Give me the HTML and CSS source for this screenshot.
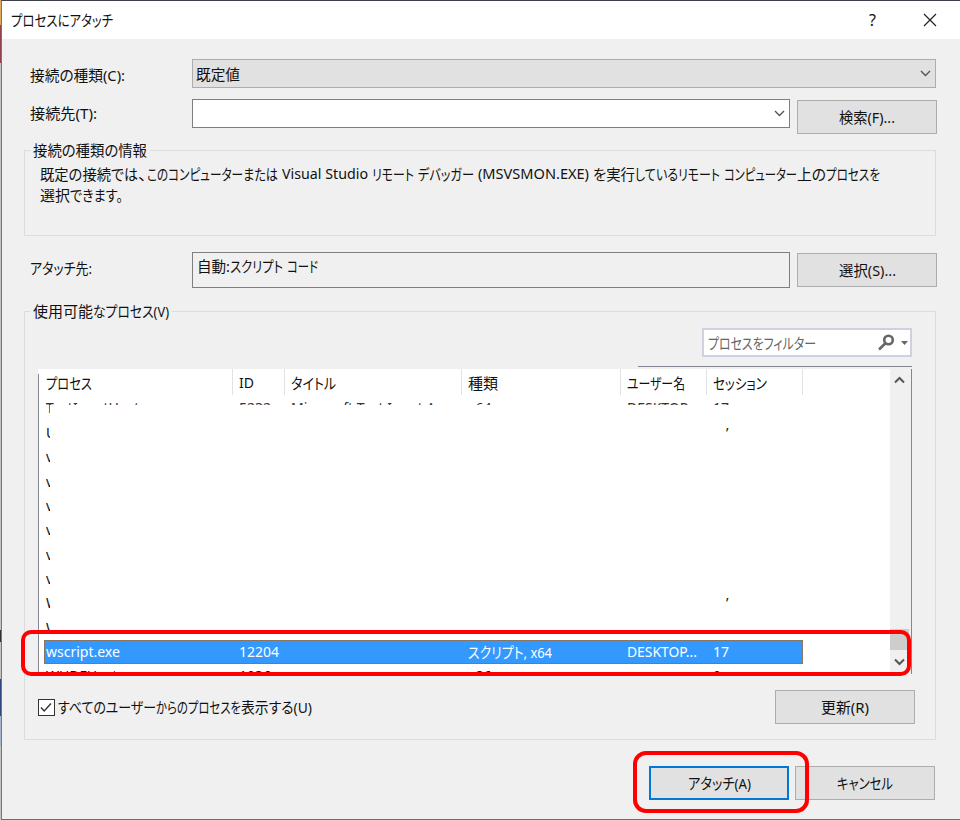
FILE: index.html
```html
<!DOCTYPE html>
<html lang="ja">
<head>
    <meta charset="utf-8">
    <title>プロセスにアタッチ</title>
    <link rel="stylesheet" href="styles.css">
</head>
<body>
<div class="behind"><i class="b1"></i><i class="b2"></i><i class="b3"></i><i class="b4"></i><i class="b5"></i></div>
<div class="dialog">
    <div class="titlebar">
        <span class="fit title" data-w="102">プロセスにアタッチ</span>
        <span class="help">?</span>
        <svg class="close" width="14" height="14" viewBox="0 0 14 14"><path d="M1 1l12 12M13 1L1 13"/></svg>
    </div>

    <div class="row row_type">
        <label><span class="fit" data-w="95">接続の種類(C):</span></label>
        <div class="combo gray"><span class="fit" data-w="44">既定値</span>
            <svg width="11" height="7" viewBox="0 0 11 7"><path d="M1 1l4.5 4.5L10 1"/></svg>
        </div>
    </div>

    <div class="row row_target">
        <label><span class="fit" data-w="67">接続先(T):</span></label>
        <div class="combo"><span></span>
            <svg width="11" height="7" viewBox="0 0 11 7"><path d="M1 1l4.5 4.5L10 1"/></svg>
        </div>
        <button><span class="fit" data-w="56">検索(F)...</span></button>
    </div>

    <div class="group info">
        <div class="legend"><span class="fit" data-w="114">接続の種類の情報</span></div>
        <p><span class="fit" data-w="71">既定の接続</span><span class="fit" data-w="27">では</span><span class="fit" data-w="9">、</span><span class="fit" data-w="96">このコンピューター</span><span class="fit" data-w="35">または</span><span class="fit gap latin" data-w="86">Visual Studio</span><span class="fit gap" data-w="42">リモート</span><span class="fit gap" data-w="56">デバッガー</span><span class="fit gap latin" data-w="111">(MSVSMON.EXE)</span><span class="fit gap" data-w="42">を実行</span><span class="fit" data-w="43">している</span><span class="fit" data-w="42">リモート</span><span class="fit gap" data-w="73">コンピューター</span><span class="fit" data-w="29">上の</span><span class="fit" data-w="54">プロセスを</span></p>
        <p><span class="fit" data-w="30">選択</span><span class="fit" data-w="53">できます。</span></p>
    </div>

    <div class="row row_attach">
        <label><span class="fit" data-w="62">アタッチ先:</span></label>
        <div class="code_type"><span class="fit" data-w="33">自動:</span><span class="fit" data-w="53">スクリプト</span><span class="fit gap" data-w="31">コード</span></div>
        <button><span class="fit" data-w="57">選択(S)...</span></button>
    </div>

    <div class="group processes">
        <div class="legend"><span class="fit" data-w="60">使用可能</span><span class="fit" data-w="76">なプロセス(V)</span></div>
        <div class="filter">
            <span class="fit" data-w="108">プロセスをフィルター</span>
            <svg width="32" height="20" viewBox="0 0 32 20">
                <circle cx="12.5" cy="7" r="4.3"/><path d="M9.2 10.5L3 16.5"/>
                <path class="tri" d="M25 8h7l-3.5 4z"/>
            </svg>
        </div>

        <div class="list">
            <div class="table">
                <div class="cols head">
                    <span><b class="fit" data-w="46">プロセス</b></span><span>ID</span><span><b class="fit" data-w="45">タイトル</b></span><span><b class="fit" data-w="30">種類</b></span><span><b class="fit" data-w="58">ユーザー名</b></span><span><b class="fit" data-w="54">セッション</b></span>
                </div>
                <div class="rows">
                    <div class="cut">
                        <div class="cols"><span>TextInputHost.exe</span><span>5232</span><span>Microsoft Text Input A</span><span>x64</span><span>DESKTOP</span><span>17</span></div>
                        <em>T</em>
                    </div>
                    <div class="part"><em>U</em><u>’</u></div>
                    <div class="part"><em>v</em></div>
                    <div class="part"><em>v</em></div>
                    <div class="part"><em>v</em></div>
                    <div class="part"><em>v</em></div>
                    <div class="part"><em>v</em></div>
                    <div class="part"><em>v</em></div>
                    <div class="part"><em>W</em><u>’</u></div>
                    <div class="part"><em>W</em></div>
                    <div class="cols selected"><span>wscript.exe</span><span>12204</span><span></span><span><b class="fit" data-w="84">スクリプト, x64</b></span><span><b class="fit latin" data-w="70">DESKTOP...</b></span><span>17</span></div>
                    <div class="cols last"><span>WUDFHost.exe</span><span>1036</span><span></span><span>x86</span><span></span><span>0</span></div>
                </div>
            </div>
            <div class="scroll">
                <svg width="11" height="8" viewBox="0 0 11 8"><path d="M1 6.5L5.5 2L10 6.5"/></svg>
                <div class="thumb"></div>
                <svg width="11" height="8" viewBox="0 0 11 8"><path d="M1 1.5L5.5 6L10 1.5"/></svg>
            </div>
            <div class="topline"></div>
            <div class="mark mark_row"></div>
        </div>

        <div class="under">
            <div class="check"><svg width="12" height="13" viewBox="0 0 12 12"><path d="M1 6l3.2 3.5L11 2"/></svg></div>
            <span class="fit" data-w="98">すべてのユーザー</span><span class="fit" data-w="85">からのプロセスを</span><span class="fit" data-w="71">表示する(U)</span>
            <button><span class="fit" data-w="48">更新(R)</span></button>
        </div>
    </div>

    <div class="footer">
        <button class="default"><span class="fit" data-w="63">アタッチ(A)</span></button>
        <button><span class="fit" data-w="56">キャンセル</span></button>
        <div class="mark mark_attach"></div>
    </div>
</div>

<script>
    // squeeze each label to its UI font width
    document.querySelectorAll('.fit').forEach(function(el){
        let w = Number(el.dataset.w);
        let real = el.getBoundingClientRect().width;
        el.style.transform = `scaleX(${w/real})`;
        el.style.marginRight = `${w-real}px`;
    });
</script>
</body>
</html>
```

FILE: styles.css
```css
*{
    box-sizing:border-box;
}

body{
    margin:0;
    width:960px;
    height:820px;
    overflow:hidden;
    display:flex;
    background-color:#f0f0f0;
    color:#111;
    font-family:"Noto Sans", "Noto Sans CJK JP", sans-serif;
    font-size:14px;
    line-height:20px;
}

.behind{
    width:1px;
    display:flex;
    flex-direction:column;
    background-color:#c4c4c4;
}
.b1{
    height:25px;
    background-color:#d9a85c;
}
.b2{
    height:38px;
    background-color:#8d4450;
}
.b3{
    height:12px;
    margin-top:567px;
    background-color:#333;
}
.b4{
    height:37px;
    margin-top:37px;
    background-color:#2f477c;
}
.b5{
    height:30px;
    background-color:#a9b6d0;
}

.dialog{
    width:959px;
    height:820px;
    border-left:1px solid #777;
    border-top:1px solid #3f3f4c;
    border-bottom:1px solid #6e6e6e;
}

.fit{
    display:inline-block;
    flex-shrink:0;
    white-space:nowrap;
    font-size:15px;
    font-weight:normal;
    font-feature-settings:"palt";
    transform-origin:0 0;
}
.latin{
    font-size:14px;
}
.gap{
    margin-left:4px;
}

.titlebar{
    height:38px;
    padding:0 23px 0 9px;
    display:flex;
    align-items:center;
    background-color:white;
}
.help{
    margin-left:auto;
    margin-right:47px;
    font-size:16px;
}
svg{
    flex-shrink:0;
    fill:none;
    stroke:#555;
    stroke-width:1.4;
}
.close{
    stroke:#222;
    stroke-width:1.2;
}

.row{
    display:flex;
    margin-left:28px;
}
.row label{
    width:162px;
    flex-shrink:0;
    display:flex;
}
.row_type{
    margin-top:20px;
    height:29px;
}
.row_type label{
    padding-top:6px;
}
.row_target{
    margin-top:11px;
    height:35px;
}
.row_target label{
    padding-top:4px;
}

.combo{
    width:598px;
    height:29px;
    padding:0 4px 0 3px;
    display:flex;
    align-items:center;
    justify-content:space-between;
    background-color:white;
    border:1px solid #7f7f7f;
}
.gray{
    width:744px;
    background-color:#e1e1e1;
    border-color:#adadad;
}

button{
    width:140px;
    height:34px;
    margin:1px 0 0 7px;
    padding:0;
    flex-shrink:0;
    display:flex;
    align-items:center;
    justify-content:center;
    background-color:#e1e1e1;
    border:1px solid #adadad;
    color:#111;
    font:inherit;
}

.group{
    width:912px;
    margin-left:22px;
    border:1px solid #dcdcdc;
}
.legend{
    width:max-content;
    height:20px;
    margin:-11px 0 0 5px;
    padding:0 3px;
    background-color:#f0f0f0;
}
.info{
    height:86px;
    margin-top:16px;
}
.info .legend{
    height:22px;
}
.info p{
    display:flex;
    margin:0 0 0 15px;
    padding-top:2px;
    height:21px;
}

.row_attach{
    margin-top:16px;
    height:36px;
}
.row_attach label{
    padding-top:6px;
}
.code_type{
    width:598px;
    height:36px;
    padding:3px 4px;
    display:flex;
    border:1px solid #7f7f7f;
}

.processes{
    height:429px;
    margin-top:23px;
}
.filter{
    width:210px;
    height:29px;
    margin:7px 0 0 677px;
    padding:0 2px 0 4px;
    display:flex;
    align-items:center;
    justify-content:space-between;
    background-color:white;
    border:2px solid #d0d0df;
    color:#666;
}
.filter svg{
    stroke:#666;
    stroke-width:2.6;
}
.filter .tri{
    fill:#666;
    stroke:none;
}

.list{
    position:relative;
    width:874px;
    height:305px;
    margin:12px 0 0 13px;
    padding-right:2px;
    display:flex;
    border-right:1px solid #828790;
}
.topline{
    position:absolute;
    top:-3px;
    right:-1px;
    width:274px;
    height:1px;
    background-color:#828790;
}
.table{
    width:852px;
    height:303px;
    overflow:hidden;
    background:linear-gradient(#828790, #828790) 0 5px / 1px 100% no-repeat, white;
}
.cols{
    display:grid;
    grid-template-columns:195px 52px 177px 159px 86px 96px;
    font-size:14px;
}
.cols span{
    padding-left:6px;
    white-space:nowrap;
    overflow:hidden;
}
.cols span:first-child{
    padding-left:8px;
}
.head{
    width:765px;
    height:26px;
    line-height:28px;
}
.head span{
    height:26px;
    border-right:1px solid #e2e2e2;
}
.rows{
    height:277px;
    padding-top:1px;
}
.cut{
    height:25px;
    display:grid;
    color:#333;
}
.cut .cols{
    grid-area:1/1;
    height:9px;
    overflow:hidden;
    line-height:24px;
}
.cut em{
    grid-area:1/1;
    height:18px;
    line-height:24px;
}
em{
    width:4px;
    margin-left:8px;
    overflow:hidden;
    font-style:normal;
}
.part{
    display:flex;
    justify-content:space-between;
    width:692px;
    height:24.35px;
    line-height:24px;
}
.part u{
    width:4px;
    height:24px;
    overflow:hidden;
    text-decoration:none;
}
.selected{
    width:759px;
    height:24px;
    margin-left:6px;
    grid-template-columns:188px 52px 177px 159px 86px 94px;
    line-height:22px;
    background-color:#3399ff;
    border:1px solid #8c7462;
    color:white;
}
.cols.selected span:first-child{
    padding-left:1px;
}
.last{
    line-height:24px;
}

.scroll{
    width:19px;
    height:303px;
    padding:7px 0 6px;
    display:flex;
    flex-direction:column;
    align-items:center;
    background-color:#f0f0f0;
}
.scroll svg{
    stroke-width:2;
}
.thumb{
    width:19px;
    height:21px;
    margin:auto 0 8px;
    background-color:#cdcdcd;
}

.under{
    display:flex;
    margin:16px 20px 0 13px;
    height:34px;
}
.under .check{
    width:17px;
    height:17px;
    margin:9px 3px 0 0;
    padding:1px;
    display:flex;
    background-color:white;
    border:1px solid #333;
}
.check svg{
    stroke:#333;
}
.under > .fit{
    margin-top:7px;
}
.under button{
    margin:0 0 0 auto;
}

.footer{
    position:relative;
    display:flex;
    margin:26px 0 0 647px;
}
.footer button{
    margin:0 6px 0 0;
}
.footer .default{
    border:2px solid #0078d7;
}

/* red callouts over the dialog */
.mark{
    position:absolute;
    border:4px solid #ff0000;
}
.mark_row{
    left:-17px;
    top:261px;
    width:890px;
    height:46px;
    border-radius:10px;
}
.mark_attach{
    left:-16px;
    top:-15px;
    width:176px;
    height:62px;
    border-radius:13px;
}
```
